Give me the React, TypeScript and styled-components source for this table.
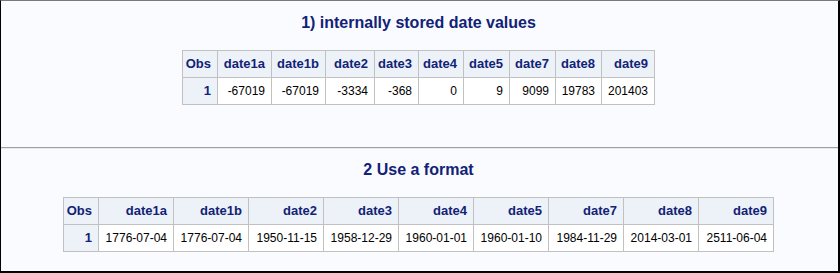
import React from "react"
import styled, { createGlobalStyle } from "styled-components"

const GlobalStyle = createGlobalStyle`
  body {
    margin: 0;
    background: #ffffff;
    font-family: "Liberation Sans", Arial, sans-serif;
  }
`

const Frame = styled.div`
  width: 840px;
  height: 273px;
  box-sizing: border-box;
  border-top: 1px solid #7a7a7a;
  border-left: 1px solid #000;
  border-right: 2px solid #000;
  border-bottom: 2px solid #000;
  background: #fafbfe;
  display: flex;
  flex-direction: column;
  overflow: hidden;
`

const Section = styled.div<{ $top: number; $height?: number }>`
  display: flex;
  flex-direction: column;
  align-items: center;
  padding-top: ${(p) => p.$top}px;
  padding-right: 2px;
  box-sizing: border-box;
  ${(p) => (p.$height ? `height: ${p.$height}px;` : "flex: 1;")}
`

const Divider = styled.div`
  height: 0;
  border-top: 1px solid #a0a0a0;
  border-bottom: 1px solid #e8e8e8;
`

const Title = styled.div`
  font-size: 16px;
  font-weight: bold;
  line-height: 20px;
  color: #112277;
  margin-bottom: 17px;
`

const Table = styled.table<{ $w: number }>`
  width: ${(p) => p.$w}px;
  border-collapse: collapse;
  table-layout: fixed;
  border: 1px solid #c1c1c1;
  font-family: "Liberation Sans", Arial, sans-serif;
`

const Col = styled.col<{ $w: number }>`
  width: ${(p) => p.$w}px;
`

const HeadCell = styled.th`
  background: #edf2f9;
  color: #112277;
  font-size: 13px;
  font-weight: bold;
  text-align: right;
  padding: 5px 6px 5px 0;
  line-height: 16px;
  border: 1px solid #c1c1c1;
  white-space: nowrap;
  overflow: hidden;
`

const DataCell = styled.td<{ $obs?: boolean }>`
  background: ${(p) => (p.$obs ? "#edf2f9" : "#ffffff")};
  color: ${(p) => (p.$obs ? "#112277" : "#000000")};
  font-size: ${(p) => (p.$obs ? "13px" : "12px")};
  font-weight: ${(p) => (p.$obs ? "bold" : "normal")};
  text-align: right;
  padding: 5px 6px 5px 0;
  line-height: 16px;
  border: 1px solid #c1c1c1;
  white-space: nowrap;
  overflow: hidden;
`

type Column = { name: string; value: string; width: number }

type PrintTableProps = {
  obsWidth: number
  columns: Column[]
}

const PrintTable: React.FC<PrintTableProps> = ({ obsWidth, columns }) => {
  const total = columns.reduce((sum, c) => sum + c.width, obsWidth)

  return (
    <Table $w={total}>
      <colgroup>
        <Col $w={obsWidth} />
        {columns.map((c) => (
          <Col key={c.name} $w={c.width} />
        ))}
      </colgroup>
      <thead>
        <tr>
          <HeadCell>Obs</HeadCell>
          {columns.map((c) => (
            <HeadCell key={c.name}>{c.name}</HeadCell>
          ))}
        </tr>
      </thead>
      <tbody>
        <tr>
          <DataCell $obs>1</DataCell>
          {columns.map((c) => (
            <DataCell key={c.name}>{c.value}</DataCell>
          ))}
        </tr>
      </tbody>
    </Table>
  )
}

const rawColumns: Column[] = [
  { name: "date1a", value: "-67019", width: 54 },
  { name: "date1b", value: "-67019", width: 54 },
  { name: "date2", value: "-3334", width: 49 },
  { name: "date3", value: "-368", width: 44 },
  { name: "date4", value: "0", width: 45 },
  { name: "date5", value: "9", width: 46 },
  { name: "date7", value: "9099", width: 46 },
  { name: "date8", value: "19783", width: 46 },
  { name: "date9", value: "201403", width: 53 },
]

const formattedColumns: Column[] = [
  { name: "date1a", value: "1776-07-04", width: 75 },
  { name: "date1b", value: "1776-07-04", width: 75 },
  { name: "date2", value: "1950-11-15", width: 75 },
  { name: "date3", value: "1958-12-29", width: 75 },
  { name: "date4", value: "1960-01-01", width: 75 },
  { name: "date5", value: "1960-01-10", width: 75 },
  { name: "date7", value: "1984-11-29", width: 75 },
  { name: "date8", value: "2014-03-01", width: 75 },
  { name: "date9", value: "2511-06-04", width: 75 },
]

export default function App() {
  return (
    <>
      <GlobalStyle />
      <Frame>
        <Section $top={12} $height={146}>
          <Title>1) internally stored date values</Title>
          <PrintTable obsWidth={35} columns={rawColumns} />
        </Section>
        <Divider />
        <Section $top={11}>
          <Title>2 Use a format</Title>
          <PrintTable obsWidth={35} columns={formattedColumns} />
        </Section>
      </Frame>
    </>
  )
}
